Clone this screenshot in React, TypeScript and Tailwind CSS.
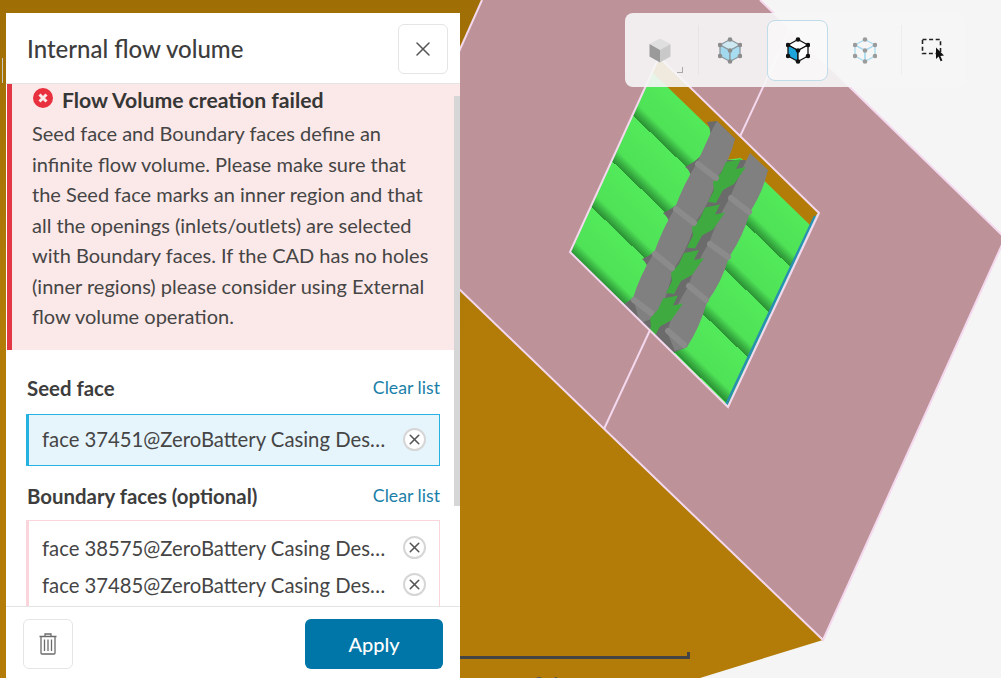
import { X } from "lucide-react";

const bodyText =
  "Seed face and Boundary faces define an infinite flow volume. Please make sure that the Seed face marks an inner region and that all the openings (inlets/outlets) are selected with Boundary faces. If the CAD has no holes (inner regions) please consider using External flow volume operation.";

/* ---------- 3D viewport drawing ---------- */
const connectors = [
  [698, 164, 716, 178],
  [676, 209, 694, 223],
  [655, 254, 672, 268],
  [634, 300, 651, 313],
  [731, 198, 749, 212],
  [710, 244, 728, 257],
  [689, 286, 706, 300],
  [668, 331, 684, 345],
];

function Scene() {
  return (
    <svg className="absolute inset-0" width="1001" height="678" viewBox="0 0 1001 678">
      <defs>
        <linearGradient id="brown" gradientUnits="userSpaceOnUse" x1="0" y1="0" x2="0" y2="340">
          <stop offset="0" stopColor="#9f6e05" />
          <stop offset="1" stopColor="#b37c08" />
        </linearGradient>
        <linearGradient
          id="tube"
          gradientUnits="userSpaceOnUse"
          x1="570"
          y1="252"
          x2="602.8"
          y2="217.9"
          spreadMethod="repeat"
        >
          <stop offset="0" stopColor="#2a9033" />
          <stop offset="0.1" stopColor="#38b042" />
          <stop offset="0.24" stopColor="#4fe257" />
          <stop offset="1" stopColor="#52ea5a" />
        </linearGradient>
        <clipPath id="diamond">
          <polygon points="659,57 819,213 728,407 570,252" />
        </clipPath>
      </defs>

      <polygon points="0,0 482,0 400,183 400,232 823,640 700,678 0,678" fill="url(#brown)" />
      <polygon points="482,0 760,0 1005,238 823,640 400,232 400,183" fill="#bd9298" />
      <polyline points="482,0 440,94" fill="none" stroke="#f4d9ee" strokeWidth="2" />
      <polyline points="760,0 1005,238 823,640 400,232" fill="none" stroke="#f4d9ee" strokeWidth="2" />
      <line x1="790" y1="29" x2="604" y2="429" stroke="#f4d9ee" strokeWidth="2" />

      <g clipPath="url(#diamond)">
        <rect x="560" y="50" width="270" height="370" fill="url(#tube)" />
        <polygon points="659,57 825,213 810,225 650,70" fill="#b37c08" />

        {/* dark mass behind the bars, left edge follows the tube ends */}
        <path
          d="M707,122 L717,121 L735,139 L725,160 L745,160 L768,170 L750,212 L729,257 L707,302 L687,347 L675,352 L640,345 L622,305 C632,300 646,290 648,274 C649,268 646,262 642,259 C655,254 668,240 670,228 C670,221 667,216 663,213 C677,207 689,195 691,182 C692,177 690,170 685,167 C700,160 718,142 707,122 Z"
          fill="#6b6b6b"
        />
        <polygon points="725,160 738,136 754,151 741,158" fill="#b37c08" />

        {/* gray bars */}
        <path
          d="M712,130 L717,121 L735,139 Q730,160 717,178 Q710,203 695,223 Q688,249 673,270 Q668,295 657,317 L640,323 L633,298 Q640,275 654,253 Q662,230 675,208 Q683,185 697,163 Z"
          fill="#808080"
        />
        <path
          d="M745,163 L750,153 L768,170 Q763,192 750,212 Q743,237 729,257 Q722,282 707,302 Q700,327 687,347 L675,351 L667,332 Q673,310 688,287 Q695,265 709,243 Q717,220 730,197 Z"
          fill="#808080"
        />
        {[0, 1, 2, 3].map((i) => (
          <polygon
            key={i}
            transform={`translate(${-21 * i} ${45.5 * i})`}
            points="726,162 741,159 736,169 746,167 734,184 723,190 716,203 708,202 714,190 713,182 721,173"
            fill="#3faa40"
          />
        ))}
        {connectors.map((c, i) => (
          <line key={i} x1={c[0]} y1={c[1]} x2={c[2]} y2={c[3]} stroke="#8b8b8b" strokeWidth="6" strokeLinecap="round" />
        ))}
        <line x1="815" y1="216" x2="726" y2="405" stroke="#2a8eb0" strokeWidth="2.5" />
        <line x1="818" y1="214" x2="729" y2="405" stroke="#8dd4ea" strokeWidth="2" />
      </g>
      <polygon points="659,57 819,213 728,407 570,252" fill="none" stroke="#f4d9ee" strokeWidth="2" />

      {/* scale bar */}
      <rect x="440" y="656" width="250" height="3" fill="#444444" />
      <rect x="687" y="652" width="3" height="7" fill="#444444" />
      <text x="533" y="691" fontSize="20" fill="#555555" fontFamily="Lato, sans-serif">
        0.1
      </text>
    </svg>
  );
}

/* ---------- toolbar icons ---------- */
function CubeIcon({
  top,
  left,
  right,
  edge,
  node,
}: {
  top: string;
  left: string;
  right: string;
  edge: string;
  node: string;
}) {
  const pts = [
    [12, 2.5],
    [22, 8],
    [22, 19],
    [12, 24.5],
    [2, 19],
    [2, 8],
    [12, 13.5],
  ];
  return (
    <svg width="24" height="27" viewBox="0 0 24 27">
      <polygon points="12,2.5 22,8 12,13.5 2,8" fill={top} stroke={edge} strokeWidth="1.3" strokeLinejoin="round" />
      <polygon points="2,8 12,13.5 12,24.5 2,19" fill={left} stroke={edge} strokeWidth="1.3" strokeLinejoin="round" />
      <polygon points="22,8 12,13.5 12,24.5 22,19" fill={right} stroke={edge} strokeWidth="1.3" strokeLinejoin="round" />
      {pts.map((p, i) => (
        <circle key={i} cx={p[0]} cy={p[1]} r="2.3" fill={node} />
      ))}
    </svg>
  );
}

function SolidCube() {
  return (
    <svg width="22" height="25" viewBox="0 0 22 25">
      <polygon points="11,0.5 21.5,6 11,12 0.5,6" fill="#dfdfdf" />
      <polygon points="0.5,6 11,12 11,24.5 0.5,18.5" fill="#9a9a9a" />
      <polygon points="21.5,6 11,12 11,24.5 21.5,18.5" fill="#c9c9c9" />
    </svg>
  );
}

function SelectIcon() {
  return (
    <svg width="26" height="26" viewBox="0 0 26 26">
      <rect x="1.5" y="2.5" width="18" height="14" fill="none" stroke="#222222" strokeWidth="1.6" strokeDasharray="4 2.6" />
      <path d="M15 10.5 L15 22 L17.6 19.6 L19.6 24.2 L21.4 23.4 L19.4 19 L23 18.6 Z" fill="#111111" />
    </svg>
  );
}

function Toolbar() {
  return (
    <div className="absolute left-[625px] top-[13px] flex h-[74px] w-[340px] items-center rounded-lg bg-[#f6f6f6]/90">
      <div className="relative flex h-[61px] w-[73px] items-center justify-center pr-[3px]">
        <SolidCube />
        <span className="absolute left-[52px] top-[47px] h-[6px] w-[6px] border-b border-r border-[#a8a8a8]" />
      </div>
      <div className="h-[50px] w-px bg-[#e6e4e4]" />
      <div className="flex h-[61px] w-[68px] items-center justify-center pr-[6px]">
        <CubeIcon top="#cfe9f3" left="#a3d9ee" right="#a8dcf0" edge="#8c9aa0" node="#8c8c8c" />
      </div>
      <div className="flex h-[61px] w-[61px] items-center justify-center rounded-lg border border-[#bfdde9] bg-[#fbfbfb]/70">
        <CubeIcon top="#ffffff" left="#1ea5dc" right="#ffffff" edge="#111111" node="#111111" />
      </div>
      <div className="flex h-[61px] w-[73px] items-center justify-center">
        <CubeIcon top="transparent" left="transparent" right="transparent" edge="#a9dcf0" node="#9b9b9b" />
      </div>
      <div className="h-[50px] w-px bg-[#ececec]" />
      <div className="flex h-[61px] flex-1 items-center justify-center pb-[1px]">
        <SelectIcon />
      </div>
    </div>
  );
}

/* ---------- side panel ---------- */
function FaceRow({ name }: { name: string }) {
  return (
    <div className="flex h-[37px] w-full items-center justify-between">
      <span className="w-[347px] truncate text-[20.3px] text-[#454545]">{name}</span>
      <span className="mb-[1px] mr-[13px] flex h-[23px] w-[23px] shrink-0 items-center justify-center rounded-full border-2 border-[#d6d6d6] bg-white">
        <X size={17} strokeWidth={2.2} className="text-[#555555]" />
      </span>
    </div>
  );
}

function SectionTitle({ title }: { title: string }) {
  return (
    <div className="flex items-center justify-between pl-[21px] pr-[20px]">
      <span className="text-[20.4px] font-bold text-[#3d3d3d]">{title}</span>
      <span className="text-[17.7px] text-[#1a7fa8]">Clear list</span>
    </div>
  );
}

function Panel() {
  return (
    <div className="absolute bottom-0 left-[6px] top-[13px] flex w-[454px] flex-col bg-white [font-family:Lato,sans-serif]">
      <div className="flex h-[71px] shrink-0 items-center justify-between border-b border-[#e4e4e4] pl-[21px] pr-[12px] pt-[2px]">
        <h1 className="text-[24px] font-medium text-[#3d3d3d]">Internal flow volume</h1>
        <button className="flex h-[50px] w-[50px] items-center justify-center rounded-md border border-[#e5e5e5]">
          <X size={24} strokeWidth={1.5} className="text-[#555555]" />
        </button>
      </div>

      <div className="relative min-h-0 flex-1 overflow-hidden">
        <div className="ml-px h-[266px] border-l-[5px] border-[#e23744] bg-[#fbe8e8] pl-[20px] pr-[20px]">
          <div className="flex h-[34px] items-center">
            <svg width="20" height="20" viewBox="0 0 20 20" className="mb-[6px] ml-px shrink-0">
              <circle cx="10" cy="10" r="10" fill="#e8303f" />
              <path d="M6.5 6.5 L13.5 13.5 M13.5 6.5 L6.5 13.5" stroke="#fbe8e8" strokeWidth="3" />
            </svg>
            <span className="ml-[9px] text-[21.2px] font-bold text-[#363636]">Flow Volume creation failed</span>
          </div>
          <p className="w-[402px] text-[20px] leading-[30.5px] text-[#454545]">{bodyText}</p>
        </div>

        <div className="pt-[23px]">
          <SectionTitle title="Seed face" />
          <div className="mx-[20px] mt-[10px] flex h-[52px] items-center border border-l-[3px] border-[#25b2e0] bg-[#e6f4fb] pl-[13px]">
            <FaceRow name="face 37451@ZeroBattery Casing Design Final Version" />
          </div>
          <div className="mt-[15px]">
            <SectionTitle title="Boundary faces (optional)" />
          </div>
          <div className="mx-[20px] mt-[9px] border border-l-[3px] border-[#fbd5dc] py-[8px] pl-[13px]">
            <FaceRow name="face 38575@ZeroBattery Casing Design Final Version" />
            <FaceRow name="face 37485@ZeroBattery Casing Design Final Version" />
            <FaceRow name="face 37490@ZeroBattery Casing Design Final Version" />
          </div>
        </div>

        {/* scrollbar thumb */}
        <div className="absolute right-0 top-[12px] h-[410px] w-[6px] bg-[#d6d6d6]" />
      </div>

      <div className="flex h-[72px] shrink-0 items-center justify-between border-t border-[#e4e4e4] pl-[17px] pr-[17px] pt-[3px]">
        <button className="flex h-[50px] w-[50px] items-center justify-center rounded-md border border-[#e5e5e5]">
          <svg width="18" height="22" viewBox="0 0 18 22" fill="none" stroke="#6b6b6b" strokeWidth="1.3">
            <path d="M0.5 3.5 H17.5 M6 3.5 V1 H12 V3.5" />
            <path d="M2 3.5 V20 Q2 21 3 21 H15 Q16 21 16 20 V3.5" />
            <path d="M5.5 6.5 V18 M9 6.5 V18 M12.5 6.5 V18" />
          </svg>
        </button>
        <button className="flex h-[50px] w-[138px] items-center justify-center rounded-md bg-[#0076a8] text-[20px] font-medium text-white">
          Apply
        </button>
      </div>
    </div>
  );
}

export default function App() {
  return (
    <div className="relative h-[678px] w-[1001px] overflow-hidden bg-[#f5f5f5]">
      <Scene />
      <div className="absolute left-[2px] top-[58px] h-[25px] w-px bg-[#c9c9c9]" />
      <Panel />
      <Toolbar />
    </div>
  );
}
